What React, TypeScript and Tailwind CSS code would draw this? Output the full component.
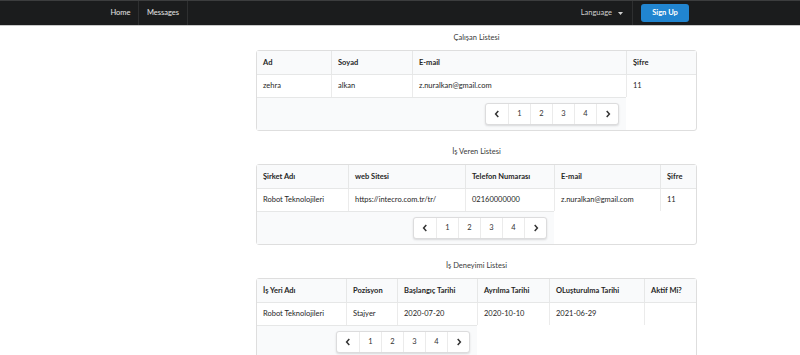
import React from "react";

type Col = { label: string; width: number };

const employeeCols: Col[] = [
  { label: "Ad", width: 74 },
  { label: "Soyad", width: 81 },
  { label: "E-mail", width: 214 },
  { label: "Şifre", width: 70 },
];

const employerCols: Col[] = [
  { label: "Şirket Adı", width: 91 },
  { label: "web Sitesi", width: 117 },
  { label: "Telefon Numarası", width: 89 },
  { label: "E-mail", width: 106 },
  { label: "Şifre", width: 36 },
];

const experienceCols: Col[] = [
  { label: "İş Yeri Adı", width: 89 },
  { label: "Pozisyon", width: 51 },
  { label: "Başlangıç Tarihi", width: 80 },
  { label: "Ayrılma Tarihi", width: 72 },
  { label: "OLuşturulma Tarihi", width: 95 },
  { label: "Aktif Mi?", width: 52 },
];

const Chevron = ({ dir }: { dir: "left" | "right" }) => (
  <svg width="6" height="8" viewBox="0 0 6 8" fill="none">
    <path
      d={dir === "left" ? "M4.3 1 L1.6 4 L4.3 7" : "M1.7 1 L4.4 4 L1.7 7"}
      stroke="currentColor"
      strokeWidth="1.5"
    />
  </svg>
);

const Pagination = () => {
  const items: React.ReactNode[] = [
    <Chevron key="l" dir="left" />,
    "1",
    "2",
    "3",
    "4",
    <Chevron key="r" dir="right" />,
  ];
  return (
    <div className="inline-flex h-[22px] rounded-[3px] border border-[#dcdcdd] bg-white shadow-[0_1px_2px_0_rgba(34,36,38,0.15)]">
      {items.map((item, i) => (
        <div
          key={i}
          className={`flex w-[22px] items-center justify-center text-[7.5px] text-[#333] ${
            i > 0 ? "border-l border-[#ebebeb]" : ""
          }`}
        >
          {item}
        </div>
      ))}
    </div>
  );
};

const ListTable = ({
  title,
  cols,
  row,
}: {
  title: string;
  cols: Col[];
  row: string[];
}) => (
  <section>
    <h3 className="mb-[5px] h-[14px] text-center text-[7.5px] leading-[14px] font-normal text-[#3a3a3a]">
      {title}
    </h3>
    <table className="w-[441px] table-fixed border-separate border-spacing-0 rounded-[3px] border border-[#dedede] bg-white text-[7.5px] text-[#262626]">
      <colgroup>
        {cols.map(c => (
          <col key={c.label} style={{ width: c.width }} />
        ))}
      </colgroup>
      <thead>
        <tr>
          {cols.map((c, i) => (
            <th
              key={c.label}
              className={`h-[24px] border-b border-[#e6e7e7] bg-[#f9fafb] px-[6px] py-0 text-left font-bold ${
                i > 0 ? "border-l" : ""
              }`}
            >
              {c.label}
            </th>
          ))}
        </tr>
      </thead>
      <tbody>
        <tr>
          {row.map((cell, i) => (
            <td
              key={i}
              className={`h-[22px] px-[6px] py-0 ${
                i > 0 ? "border-l border-[#ebebeb]" : ""
              }`}
            >
              {cell}
            </td>
          ))}
        </tr>
      </tbody>
      <tfoot>
        <tr>
          <th
            colSpan={3}
            className="h-[33px] border-t border-[#e6e7e7] bg-[#f9fafb] py-0 pr-[7px] text-right font-normal"
          >
            <Pagination />
          </th>
        </tr>
      </tfoot>
    </table>
  </section>
);

export default function App() {
  return (
    <div
      className="min-h-[355px] bg-white"
      style={{ fontFamily: "Lato, 'Open Sans', sans-serif" }}
    >
      <nav className="h-[26px] border-t border-b border-t-[#3c3d3e] border-b-[#c9c9c9] bg-[#1b1c1d] text-[7.5px]">
        <div className="ml-[103px] flex h-full w-[594px] items-stretch">
          <a className="flex w-[36px] items-center justify-center border-r border-[#2e2f30] text-white/90">
            Home
          </a>
          <a className="flex w-[49px] items-center justify-center border-r border-[#2e2f30] text-white/90">
            Messages
          </a>
          <div className="flex-1" />
          <div className="flex items-center gap-[6px] border-r border-[#2e2f30] pr-[9px] text-[#cfcfcf]">
            <span>Language</span>
            <svg width="5" height="3" viewBox="0 0 5 3">
              <path d="M0 0 H5 L2.5 3 Z" fill="#cfcfcf" />
            </svg>
          </div>
          <div className="flex items-center px-[8px]">
            <button className="h-[18px] w-[48px] rounded-[3px] bg-[#2185d0] text-[7.5px] font-bold text-white">
              Sign Up
            </button>
          </div>
        </div>
      </nav>

      <main className="ml-[256px] flex w-[441px] flex-col gap-[14px] pt-[5px]">
        <ListTable
          title="Çalışan Listesi"
          cols={employeeCols}
          row={["zehra", "alkan", "z.nuralkan@gmail.com", "11"]}
        />
        <ListTable
          title="İş Veren Listesi"
          cols={employerCols}
          row={[
            "Robot Teknolojileri",
            "https://intecro.com.tr/tr/",
            "02160000000",
            "z.nuralkan@gmail.com",
            "11",
          ]}
        />
        <ListTable
          title="İş Deneyimi Listesi"
          cols={experienceCols}
          row={[
            "Robot Teknolojileri",
            "Stajyer",
            "2020-07-20",
            "2020-10-10",
            "2021-06-29",
            "",
          ]}
        />
      </main>
    </div>
  );
}
